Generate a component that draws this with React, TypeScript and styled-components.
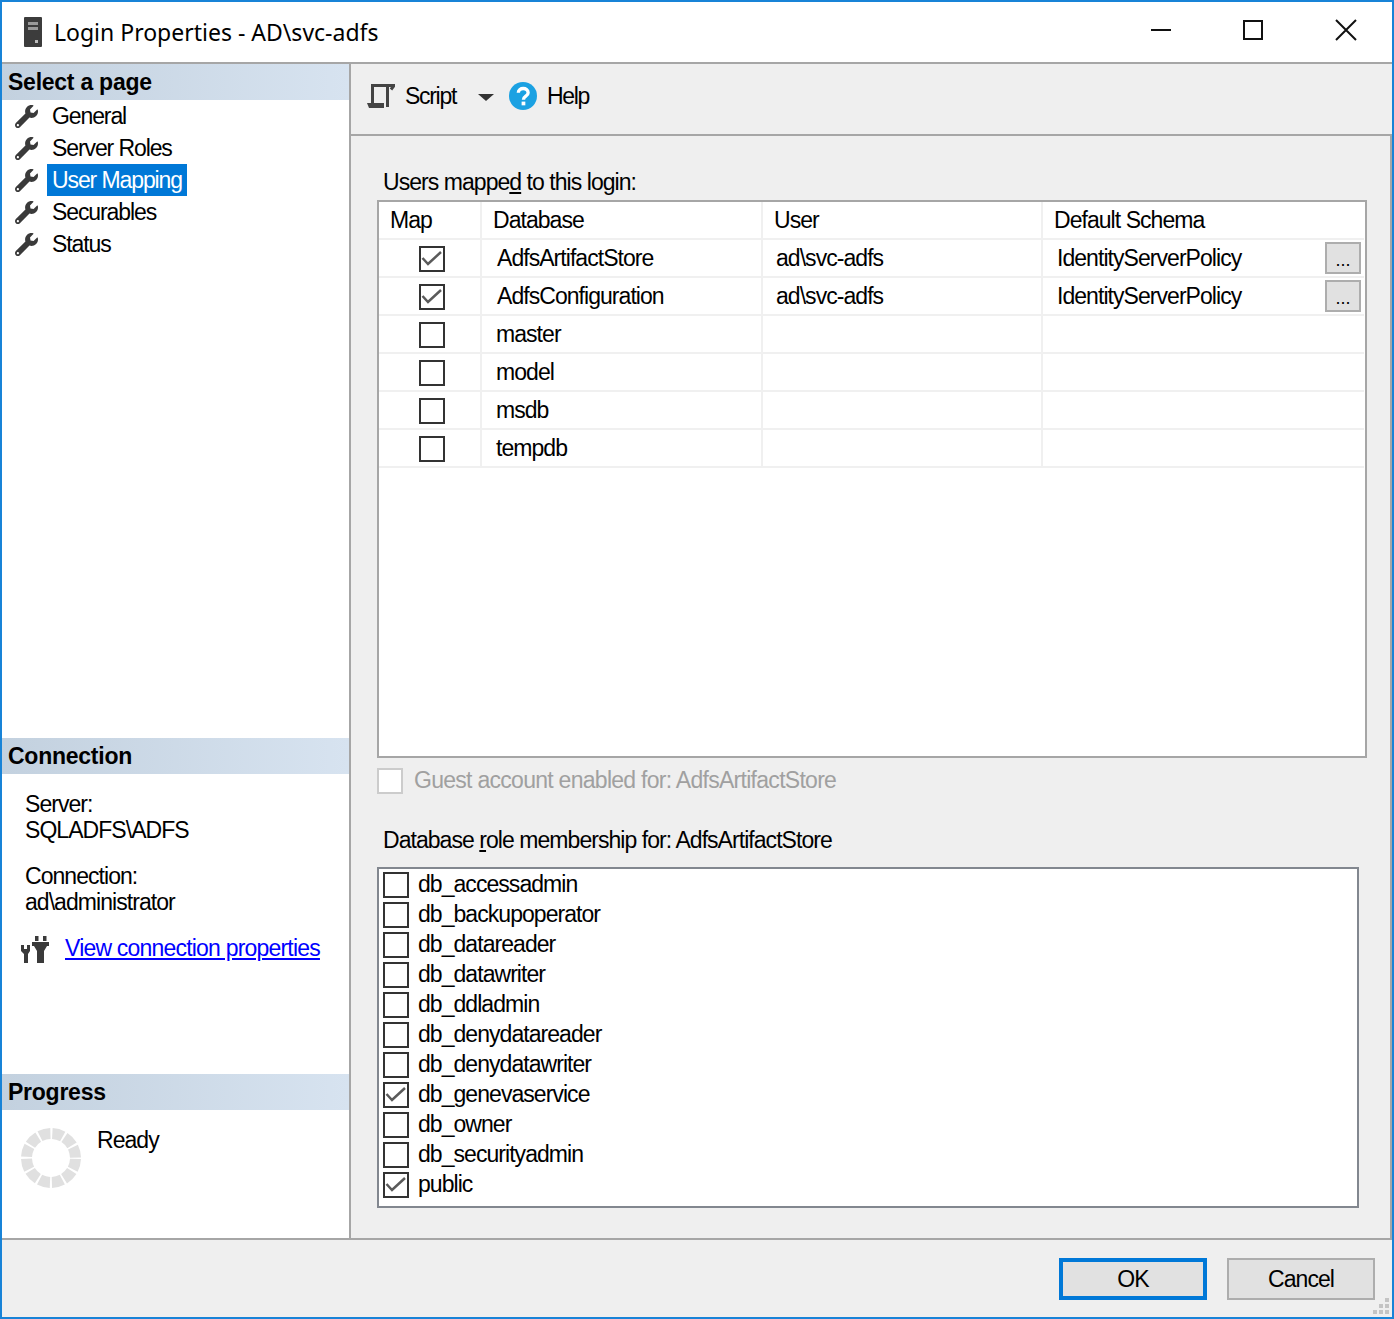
import React from 'react';
import styled, { createGlobalStyle } from 'styled-components';
import { FaWrench } from 'react-icons/fa';

const GlobalStyle = createGlobalStyle`
  html, body {
    margin: 0;
    padding: 0;
    background: #fff;
  }
  * {
    box-sizing: border-box;
  }
`;

const Window = styled.div`
  width: 1394px;
  height: 1319px;
  display: flex;
  flex-direction: column;
  border: 2px solid #1883d7;
  background: #fff;
  color: #000;
  font-family: "Liberation Sans", Arial, sans-serif;
  font-size: 23px;
  letter-spacing: -0.95px;
  overflow: hidden;
`;

const TitleBar = styled.div`
  height: 62px;
  flex: none;
  display: flex;
  align-items: center;
  padding-left: 22px;
  border-bottom: 2px solid #a6a6a6;
`;

const TitleText = styled.div`
  margin-left: 12px;
  font-family: "Noto Sans", "Open Sans", sans-serif;
  font-size: 23px;
  letter-spacing: 0;
  flex: 1;
`;

const WindowButtons = styled.div`
  display: flex;
  align-items: center;
  margin-bottom: 5px;
`;

const WindowButton = styled.div`
  width: 93px;
  height: 30px;
  display: flex;
  align-items: center;
  justify-content: center;
`;

const Body = styled.div`
  flex: 1;
  display: flex;
  min-height: 0;
`;

const Sidebar = styled.div`
  width: 349px;
  flex: none;
  display: flex;
  flex-direction: column;
  border-right: 2px solid #a6a6a6;
  background: #fff;
`;

const SideHeader = styled.div`
  height: 36px;
  flex: none;
  display: flex;
  align-items: center;
  padding-left: 6px;
  font-weight: 700;
  letter-spacing: -0.25px;
  background: linear-gradient(to right, #c3d1df, #d7e3f0);
`;

const PageList = styled.div`
  height: 638px;
  flex: none;
`;

const PageRow = styled.div`
  height: 32px;
  display: flex;
  align-items: center;
  padding-left: 13px;
  color: #3a3a3a;
`;

const PageLabel = styled.div<{ $active?: boolean }>`
  margin-left: 9px;
  height: 32px;
  line-height: 33px;
  padding: 0 5px;
  letter-spacing: -1.1px;
  color: ${(p) => (p.$active ? '#fff' : '#000')};
  background: ${(p) => (p.$active ? '#0078d7' : 'transparent')};
`;

const ConnectionInfo = styled.div`
  height: 300px;
  flex: none;
  padding: 17px 0 0 23px;
`;

const InfoBlock = styled.div`
  line-height: 26px;
  margin-bottom: 20px;
`;

const LinkRow = styled.div`
  display: flex;
  align-items: flex-start;
  margin-left: -5px;
  margin-top: -4px;
`;

const PlugWrap = styled.div`
  margin-top: 4px;
  height: 30px;
`;

const ConnLink = styled.span`
  margin: 4px 0 0 15px;
  line-height: 26px;
  letter-spacing: -0.8px;
  color: #0000ff;
  text-decoration: underline;
`;

const ProgressInfo = styled.div`
  flex: 1;
  display: flex;
  align-items: flex-start;
  padding: 18px 0 0 19px;
`;

const ReadyText = styled.div`
  margin: -1px 0 0 16px;
  line-height: 26px;
`;

const Main = styled.div`
  flex: 1;
  display: flex;
  flex-direction: column;
  background: #efefef;
  min-width: 0;
`;

const Toolbar = styled.div`
  height: 72px;
  flex: none;
  display: flex;
  align-items: center;
  padding: 0 0 6px 16px;
  border-bottom: 2px solid #a6a6a6;
`;

const ToolLabel = styled.span`
  margin-left: 10px;
  letter-spacing: -1.3px;
`;

const Caret = styled.div`
  width: 0;
  height: 0;
  margin: 2px 15px 0 22px;
  border-left: 8px solid transparent;
  border-right: 8px solid transparent;
  border-top: 7px solid #333;
`;

const Content = styled.div`
  flex: 1;
  display: flex;
  flex-direction: column;
  padding: 0 0 0 26px;
  border-right: 2px solid #a6a6a6;
  min-height: 0;
`;

const GroupLabel = styled.div<{ $height: number; $bottom: number }>`
  height: ${(p) => p.$height}px;
  flex: none;
  display: flex;
  align-items: flex-end;
  padding: 0 0 ${(p) => p.$bottom}px 6px;
  line-height: 26px;
`;

const AccessKey = styled.span`
  text-decoration: underline;
`;

const Grid = styled.div`
  width: 990px;
  height: 558px;
  flex: none;
  background: #fff;
  border: 2px solid #a6a6a6;
`;

const GridRow = styled.div`
  display: grid;
  grid-template-columns: 103px 281px 280px 1fr;
  height: 38px;
  margin-right: 1px;
  border-bottom: 2px solid #f0f0f0;
`;

const GridCell = styled.div<{ $header?: boolean; $inset?: number }>`
  position: relative;
  display: flex;
  align-items: center;
  padding-left: ${(p) => (p.$header ? 11 : 13) + (p.$inset ?? 0)}px;
  border-right: 2px solid #f0f0f0;
  &:last-child {
    border-right: none;
  }
`;

const CheckCell = styled(GridCell)`
  padding-left: 40px;
  padding-top: 2px;
`;

const EllipsisButton = styled.div`
  position: absolute;
  right: 3px;
  top: 2px;
  width: 36px;
  height: 32px;
  border: 2px solid #adadad;
  background: #e1e1e1;
  display: flex;
  align-items: flex-end;
  justify-content: center;
  font-size: 18px;
  line-height: 24px;
  letter-spacing: 0;
`;

const CheckBox = styled.div<{ $disabled?: boolean }>`
  width: 26px;
  height: 26px;
  flex: none;
  border: 2px solid ${(p) => (p.$disabled ? '#cccccc' : '#333333')};
  background: #fff;
  display: flex;
  align-items: center;
  justify-content: center;
`;

const GuestRow = styled.div`
  height: 46px;
  flex: none;
  display: flex;
  align-items: center;
  color: #a0a0a0;
`;

const GuestLabel = styled.span`
  margin: -2px 0 0 11px;
  letter-spacing: -0.72px;
`;

const RoleList = styled.div`
  width: 982px;
  height: 341px;
  flex: none;
  padding: 1px 0 0 4px;
  background: #fff;
  border: 2px solid #82878f;
`;

const RoleRow = styled.div`
  height: 30px;
  display: flex;
  align-items: center;
`;

const RoleLabel = styled.span`
  margin: -2px 0 0 9px;
`;

const Footer = styled.div`
  height: 79px;
  flex: none;
  display: flex;
  justify-content: flex-end;
  gap: 20px;
  padding: 18px 17px 0 0;
  background: #efefef;
  border-top: 2px solid #a6a6a6;
  position: relative;
`;

const DialogButton = styled.div<{ $primary?: boolean }>`
  width: 148px;
  height: 42px;
  display: flex;
  align-items: center;
  justify-content: center;
  background: #e1e1e1;
  border: ${(p) => (p.$primary ? '4px solid #0078d7' : '2px solid #adadad')};
`;

const Grip = styled.svg`
  position: absolute;
  right: 1px;
  bottom: 1px;
`;

const Check = () => (
  <svg width="22" height="22" viewBox="0 0 22 22">
    <path d="M1.5 10 L7 16 L20 4" fill="none" stroke="#5a5a5a" strokeWidth="2.5" />
  </svg>
);

const ServerIcon = () => (
  <svg width="18" height="30" viewBox="0 0 18 30">
    <rect x="0" y="0" width="18" height="30" rx="1" fill="#3c3c3c" />
    <rect x="4" y="5" width="10" height="3" fill="#9a9a9a" />
    <rect x="4" y="10" width="10" height="3" fill="#9a9a9a" />
    <rect x="11" y="23" width="3" height="3" fill="#bdbdbd" />
  </svg>
);

const ScriptIcon = () => (
  <svg width="28" height="28" viewBox="0 0 28 28">
    <path d="M5.5 22 V3.5 H27 L24 7.5" fill="none" stroke="#444" strokeWidth="3" />
    <path d="M20.5 4 V25" fill="none" stroke="#444" strokeWidth="3" />
    <path d="M0 21 H17 V26 H2 Z" fill="#444" />
  </svg>
);

const HelpIcon = () => (
  <svg width="28" height="28" viewBox="0 0 30 30">
    <circle cx="15" cy="15" r="15" fill="#1ba1e2" />
    <path
      d="M10 11.5 C10 5.5 20.5 5.5 20.5 11.5 C20.5 15.5 15.5 15 15.5 19"
      fill="none"
      stroke="#fff"
      strokeWidth="3.6"
    />
    <rect x="13.5" y="21" width="4" height="4" fill="#fff" />
  </svg>
);

const PlugIcon = () => (
  <svg width="30" height="30" viewBox="0 0 30 30">
    <g fill="#3a3a3a">
      <rect x="15" y="1" width="3.5" height="5" />
      <rect x="23" y="1" width="3.5" height="5" />
      <rect x="12" y="7" width="17" height="4" />
      <path d="M14 11 H27 L24 16 V28 H17 V16 Z" />
      <path d="M1 10 H4 V14 H7 V10 H10 V16 L8 19 V28 H4 V19 L1 16 Z" />
    </g>
  </svg>
);

const Spinner = () => (
  <svg width="60" height="60" viewBox="0 0 60 60">
    <circle
      cx="30"
      cy="30"
      r="24.5"
      fill="none"
      stroke="#e0e0e0"
      strokeWidth="11"
      strokeDasharray="10.8 2"
      strokeDashoffset="-0.9"
    />
  </svg>
);

const pages = ['General', 'Server Roles', 'User Mapping', 'Securables', 'Status'];

const databases = [
  { name: 'AdfsArtifactStore', user: 'ad\\svc-adfs', schema: 'IdentityServerPolicy', mapped: true },
  { name: 'AdfsConfiguration', user: 'ad\\svc-adfs', schema: 'IdentityServerPolicy', mapped: true },
  { name: 'master', user: '', schema: '', mapped: false },
  { name: 'model', user: '', schema: '', mapped: false },
  { name: 'msdb', user: '', schema: '', mapped: false },
  { name: 'tempdb', user: '', schema: '', mapped: false },
];

const roles = [
  { name: 'db_accessadmin', on: false },
  { name: 'db_backupoperator', on: false },
  { name: 'db_datareader', on: false },
  { name: 'db_datawriter', on: false },
  { name: 'db_ddladmin', on: false },
  { name: 'db_denydatareader', on: false },
  { name: 'db_denydatawriter', on: false },
  { name: 'db_genevaservice', on: true },
  { name: 'db_owner', on: false },
  { name: 'db_securityadmin', on: false },
  { name: 'public', on: true },
];

const App = () => (
  <Window>
    <GlobalStyle />
    <TitleBar>
      <ServerIcon />
      <TitleText>Login Properties - AD\svc-adfs</TitleText>
      <WindowButtons>
        <WindowButton>
          <svg width="22" height="22" viewBox="0 0 22 22">
            <rect x="2" y="10" width="20" height="2" fill="#111" />
          </svg>
        </WindowButton>
        <WindowButton>
          <svg width="22" height="22" viewBox="0 0 22 22">
            <rect x="2" y="2" width="18" height="18" fill="none" stroke="#111" strokeWidth="2" />
          </svg>
        </WindowButton>
        <WindowButton>
          <svg width="22" height="22" viewBox="0 0 22 22">
            <path d="M1 1 L21 21 M21 1 L1 21" stroke="#111" strokeWidth="2" />
          </svg>
        </WindowButton>
      </WindowButtons>
    </TitleBar>
    <Body>
      <Sidebar>
        <SideHeader>Select a page</SideHeader>
        <PageList>
          {pages.map((page) => (
            <PageRow key={page}>
              <FaWrench size={23} />
              <PageLabel $active={page === 'User Mapping'}>{page}</PageLabel>
            </PageRow>
          ))}
        </PageList>
        <SideHeader>Connection</SideHeader>
        <ConnectionInfo>
          <InfoBlock>
            Server:
            <br />
            SQLADFS\ADFS
          </InfoBlock>
          <InfoBlock>
            Connection:
            <br />
            ad\administrator
          </InfoBlock>
          <LinkRow>
            <PlugWrap>
              <PlugIcon />
            </PlugWrap>
            <ConnLink>View connection properties</ConnLink>
          </LinkRow>
        </ConnectionInfo>
        <SideHeader>Progress</SideHeader>
        <ProgressInfo>
          <Spinner />
          <ReadyText>Ready</ReadyText>
        </ProgressInfo>
      </Sidebar>
      <Main>
        <Toolbar>
          <ScriptIcon />
          <ToolLabel>Script</ToolLabel>
          <Caret />
          <HelpIcon />
          <ToolLabel>Help</ToolLabel>
        </Toolbar>
        <Content>
          <GroupLabel $height={64} $bottom={5}>
            <span>
              Users mappe<AccessKey>d</AccessKey> to this login:
            </span>
          </GroupLabel>
          <Grid>
            <GridRow>
              <GridCell $header>Map</GridCell>
              <GridCell $header>Database</GridCell>
              <GridCell $header>User</GridCell>
              <GridCell $header>Default Schema</GridCell>
            </GridRow>
            {databases.map((db) => (
              <GridRow key={db.name}>
                <CheckCell>
                  <CheckBox>{db.mapped && <Check />}</CheckBox>
                </CheckCell>
                <GridCell $inset={db.mapped ? 2 : 1}>{db.name}</GridCell>
                <GridCell>{db.user}</GridCell>
                <GridCell $inset={1}>
                  {db.schema}
                  {db.mapped && <EllipsisButton>...</EllipsisButton>}
                </GridCell>
              </GridRow>
            ))}
          </Grid>
          <GuestRow>
            <CheckBox $disabled />
            <GuestLabel>Guest account enabled for: AdfsArtifactStore</GuestLabel>
          </GuestRow>
          <GroupLabel $height={63} $bottom={14}>
            <span>
              Database <AccessKey>r</AccessKey>ole membership for: AdfsArtifactStore
            </span>
          </GroupLabel>
          <RoleList>
            {roles.map((role) => (
              <RoleRow key={role.name}>
                <CheckBox>{role.on && <Check />}</CheckBox>
                <RoleLabel>{role.name}</RoleLabel>
              </RoleRow>
            ))}
          </RoleList>
        </Content>
      </Main>
    </Body>
    <Footer>
      <DialogButton $primary>OK</DialogButton>
      <DialogButton>Cancel</DialogButton>
      <Grip width="20" height="20" viewBox="0 0 20 20">
        <g fill="#c4c4c4">
          <rect x="14" y="2" width="4" height="4" />
          <rect x="8" y="8" width="4" height="4" />
          <rect x="14" y="8" width="4" height="4" />
          <rect x="2" y="14" width="4" height="4" />
          <rect x="8" y="14" width="4" height="4" />
          <rect x="14" y="14" width="4" height="4" />
        </g>
      </Grip>
    </Footer>
  </Window>
);

export default App;
